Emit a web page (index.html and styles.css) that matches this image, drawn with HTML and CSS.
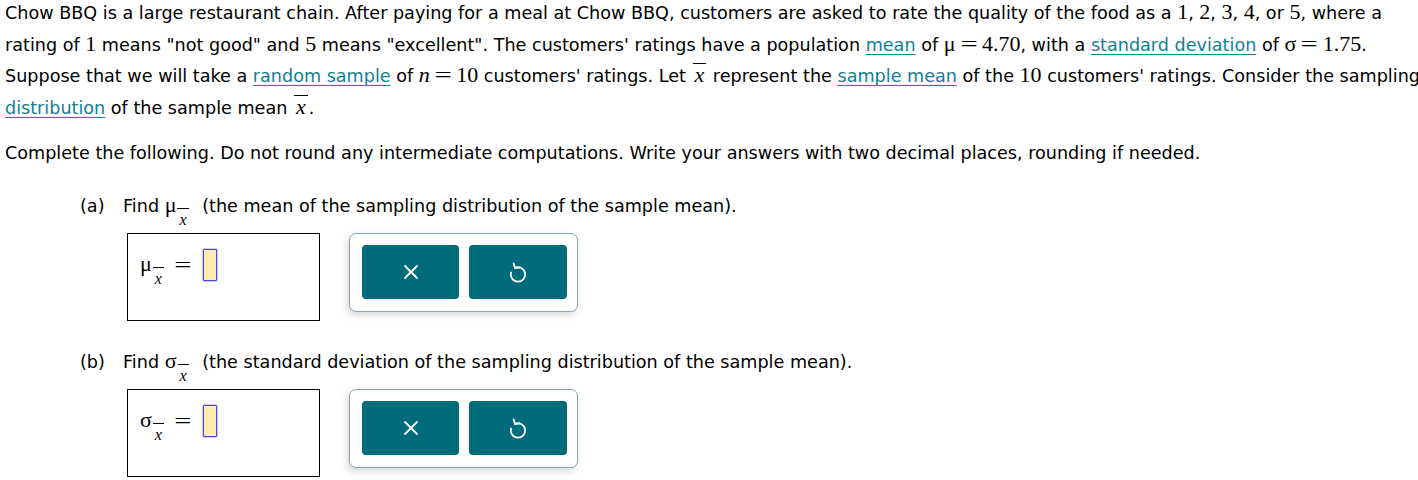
FILE: index.html
```html
<!DOCTYPE html>
<html>
<head>
<meta charset="utf-8">
<link rel="stylesheet" href="styles.css">
</head>
<body>
<div class="page">
  <p class="intro">Chow BBQ is a large restaurant chain. After paying for a meal at Chow BBQ, customers are asked to rate the quality of the food as a <span class="m">1</span>, <span class="m">2</span>, <span class="m">3</span>, <span class="m">4</span>, or <span class="m">5</span>, where a rating of <span class="m">1</span> means "not good" and <span class="m">5</span> means "excellent". The customers' ratings have a population <a class="lnk">mean</a> of <span class="m">μ<span class="eqs">=</span>4.70</span>, with a <a class="lnk">standard deviation</a> of <span class="m">σ<span class="eqs">=</span>1.75</span>. Suppose that we will take a <a class="lnk">random sample</a> of <span class="m"><i>n</i><span class="eqs">=</span>10</span> customers' ratings. Let <span class="m"><i class="bar">x</i></span> represent the <a class="lnk">sample mean</a> of the <span class="m">10</span> customers' ratings. Consider the sampling <a class="lnk">distribution</a> of the sample mean <span class="m"><i class="bar">x</i></span>.</p>

  <p class="instr">Complete the following. Do not round any intermediate computations. Write your answers with two decimal places, rounding if needed.</p>

  <div class="q">
    <div class="qhead"><span class="qlabel">(a)</span><span>Find <span class="m">μ<span class="sub"><i class="bar">x</i></span></span> (the mean of the sampling distribution of the sample mean).</span></div>
    <div class="arow">
      <div class="abox"><span class="m sym">μ<span class="sub"><i class="bar">x</i></span></span><span class="m eqs">=</span><span class="inp"></span></div>
      <div class="panel">
        <button class="btn" type="button"><svg width="20" height="20" viewBox="0 0 20 20"><path d="M4 4 L16 16 M16 4 L4 16" stroke="#fff" stroke-width="1.8" fill="none" stroke-linecap="round"/></svg></button>
        <button class="btn" type="button"><svg width="24" height="24" viewBox="0 0 20 20"><path d="M7.5 6.55 A6 6 0 1 1 4.2 10.45" stroke="#fff" stroke-width="1.5" fill="none" stroke-linecap="round"/><path d="M6.3 2.8 L7.5 6.55 L11.2 6.3" stroke="#fff" stroke-width="1.5" fill="none" stroke-linecap="round" stroke-linejoin="round"/></svg></button>
      </div>
    </div>
  </div>

  <div class="q">
    <div class="qhead"><span class="qlabel">(b)</span><span>Find <span class="m">σ<span class="sub"><i class="bar">x</i></span></span> (the standard deviation of the sampling distribution of the sample mean).</span></div>
    <div class="arow">
      <div class="abox"><span class="m sym">σ<span class="sub"><i class="bar">x</i></span></span><span class="m eqs">=</span><span class="inp"></span></div>
      <div class="panel">
        <button class="btn" type="button"><svg width="20" height="20" viewBox="0 0 20 20"><path d="M4 4 L16 16 M16 4 L4 16" stroke="#fff" stroke-width="1.8" fill="none" stroke-linecap="round"/></svg></button>
        <button class="btn" type="button"><svg width="24" height="24" viewBox="0 0 20 20"><path d="M7.5 6.55 A6 6 0 1 1 4.2 10.45" stroke="#fff" stroke-width="1.5" fill="none" stroke-linecap="round"/><path d="M6.3 2.8 L7.5 6.55 L11.2 6.3" stroke="#fff" stroke-width="1.5" fill="none" stroke-linecap="round" stroke-linejoin="round"/></svg></button>
      </div>
    </div>
  </div>
</div>
</body>
</html>
```

FILE: styles.css
```css
html, body {
  margin: 0;
  padding: 0;
  background: #fff;
  overflow-x: hidden;
}
body {
  font-family: "DejaVu Sans", Verdana, sans-serif;
  font-size: 17.6px;
  color: #000;
}
.page {
  padding: 0 0 0 5px;
}
.intro {
  margin: -2px -10px 0 0;
  line-height: 31.7px;
}
.m {
  font-family: "Liberation Serif", "Times New Roman", serif;
  font-size: 22px;
  line-height: 1;
}
.m i {
  font-style: italic;
}
.eqs {
  display: inline-block;
  font-family: "Liberation Serif", "Times New Roman", serif;
  transform: scaleX(1.4);
  margin: 0 7px;
}
.bar {
  display: inline-block;
  border-top: 1.5px solid #000;
  line-height: 22px;
  height: 16px;
  padding: 0 2px;
  margin: 0 1px;
}
.lnk {
  color: #117f94;
  text-decoration: underline;
  text-underline-offset: 3px;
}
.instr {
  margin: 12px 0 0 0;
  line-height: 32px;
}
.q {
  padding-left: 75px;
}
.qhead {
  display: flex;
  margin-top: 24px;
  line-height: 26px;
  height: 30px;
}
.q + .q .qhead {
  margin-top: 28px;
}
.qlabel {
  width: 43px;
  flex: none;
}
.sub {
  display: inline-block;
  vertical-align: -13px;
  font-size: 16px;
  line-height: 16px;
  margin-left: 1px;
  margin-right: 8px;
}
.sub .bar {
  border-top-width: 1.2px;
  line-height: 22px;
  height: 18px;
  padding: 0 2px;
  margin: 0;
}
.arow {
  display: flex;
  align-items: flex-start;
  margin-left: 47px;
  margin-top: 10px;
  gap: 29px;
}
.abox {
  border: 1px solid #000;
  display: flex;
  align-items: flex-start;
  padding: 15px 0 0 12px;
  box-sizing: content-box;
  width: 179px;
  height: 71px;
}
.abox .sym {
  line-height: 32px;
  margin-top: -1px;
}
.abox .sym .sub {
  margin-right: 13px;
}
.abox .eqs {
  font-size: 21px;
  line-height: 32px;
  margin: 0 12px 0 0;
  transform: scaleX(1.45);
}
.inp {
  display: inline-block;
  width: 12px;
  height: 30px;
  margin-left: 2px;
  background: #ffeeaa;
  border: 1px solid #4646ff;
  box-shadow: 0 0 0 0.5px #9a9aff;
  border-radius: 1px;
}
.panel {
  display: flex;
  gap: 10px;
  padding: 11px 10px 12px 12px;
  border: 1px solid #8aa3ad;
  border-radius: 7px;
  box-shadow: -2px 3px 7px rgba(0, 0, 0, 0.16);
  background: #fff;
}
.btn {
  width: 97px;
  height: 54px;
  background: #006b7b;
  border: none;
  border-radius: 4px;
  display: flex;
  align-items: center;
  justify-content: center;
  padding: 0;
}
.btn + .btn {
  width: 98px;
}
```
